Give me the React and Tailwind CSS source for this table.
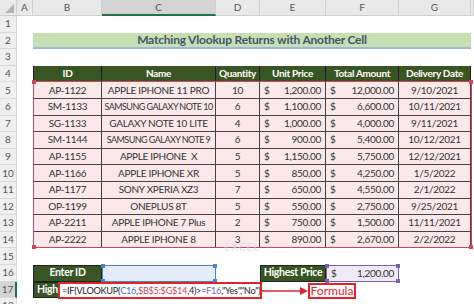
import React from 'react'

const rows = [
    ['AP-1122', 'APPLE IPHONE 11 PRO', '10', '1,200.00', '12,000.00', '9/10/2021'],
    ['SM-1133', 'SAMSUNG GALAXY NOTE 10', '6', '1,100.00', '6,600.00', '10/11/2021'],
    ['SG-1133', 'GALAXY NOTE 10 LITE', '4', '1,000.00', '4,000.00', '9/11/2021'],
    ['SM-1144', 'SAMSUNG GALAXY NOTE 9', '6', '900.00', '5,400.00', '10/12/2021'],
    ['AP-1155', 'APPLE IPHONE  X', '5', '1,150.00', '5,750.00', '12/12/2021'],
    ['AP-1166', 'APPLE IPHONE XR', '5', '850.00', '4,250.00', '1/5/2022'],
    ['AP-1177', 'SONY XPERIA XZ3', '7', '650.00', '4,550.00', '2/1/2022'],
    ['OP-1199', 'ONEPLUS 8T', '5', '550.00', '2,750.00', '9/25/2021'],
    ['AP-2211', 'APPLE IPHONE 7 Plus', '2', '750.00', '1,500.00', '11/11/2021'],
    ['AP-2222', 'APPLE IPHONE 8', '3', '890.00', '2,670.00', '2/2/2022'],
]

const RowLabel = ({ n, active }) => (
    <div
        className={
            'flex items-center justify-center text-[10px] tracking-normal text-[#555] border-r border-b border-[#dadada] ' +
            (active ? 'bg-[#d4d4d4] border-r-2 border-r-[#217346]' : 'bg-[#efefef]')
        }
    >
        {n}
    </div>
)

const Blank = ({ span }) => <div className={span || ''} />

const Money = ({ v }) => (
    <div className="flex items-center justify-between px-1 bg-[#fbe9ea] border-r border-b border-[#444]">
        <span>$</span>
        <span>{v}</span>
    </div>
)

const Cell = ({ children, first, tight }) => (
    <div
        className={
            'flex items-center justify-center bg-[#fbe9ea] border-r border-b border-[#444] whitespace-pre overflow-hidden ' +
            (first ? 'border-l ' : '') +
            (tight ? 'text-[9px] tracking-[-0.55px]' : '')
        }
    >
        {children}
    </div>
)

const Handle = ({ pos, color }) => (
    <span className={'absolute w-[4px] h-[4px] ' + pos + ' ' + color} />
)

export default function App() {
    const colHeads = ['A', 'B', 'C', 'D', 'E', 'F', 'G', '']
    return (
        <div
            className="relative w-[474px] h-[304px] overflow-hidden bg-white text-[10px] tracking-[-0.3px] text-[#333]"
            style={{ fontFamily: 'Lato, "Open Sans", sans-serif' }}
        >
            <div className="grid grid-cols-[17px_16px_69px_114px_44px_66px_73px_72px_1fr] grid-rows-[16px_repeat(18,16.6px)]">
                {/* column headers */}
                <div className="relative bg-[#e9e9e9] border-r border-b border-[#cfcfcf]">
                    <svg className="absolute right-[2px] bottom-[2px]" width="9" height="9" viewBox="0 0 9 9">
                        <polygon points="9,0 9,9 0,9" fill="#b5b5b5" />
                    </svg>
                </div>
                {colHeads.map((c, i) => (
                    <div
                        key={i}
                        className={
                            'flex items-center justify-center text-[10px] tracking-normal text-[#555] border-r border-b border-[#cfcfcf] ' +
                            (c === 'C' ? 'bg-[#d4d4d4] border-b-2 border-b-[#217346]' : 'bg-[#e9e9e9]')
                        }
                    >
                        {c}
                    </div>
                ))}

                {/* row 1 */}
                <RowLabel n={1} />
                <Blank span="col-span-8" />

                {/* row 2 title */}
                <RowLabel n={2} />
                <Blank />
                <div className="col-span-6 flex items-center justify-center bg-[#c6e0b4] border-b-2 border-[#9bb7de] text-[12px] tracking-[-0.2px] font-bold text-[#44546a]">
                    Matching Vlookup Returns with Another Cell
                </div>
                <Blank />

                {/* row 3 */}
                <RowLabel n={3} />
                <Blank span="col-span-8" />

                {/* row 4 header */}
                <RowLabel n={4} />
                <Blank />
                {['ID', 'Name', 'Quantity', 'Unit Price', 'Total Amount', 'Delivery Date'].map((h, i) => (
                    <div
                        key={h}
                        className={
                            'flex items-center justify-center bg-[#375623] text-white font-bold border-r border-b border-[#222] whitespace-nowrap overflow-hidden ' +
                            (i === 0 ? 'border-l' : '')
                        }
                    >
                        {h}
                    </div>
                ))}
                <Blank />

                {/* data rows */}
                {rows.map((r, i) => (
                    <React.Fragment key={r[0]}>
                        <RowLabel n={5 + i} />
                        <Blank />
                        <Cell first>{r[0]}</Cell>
                        <Cell tight={r[1].length > 20}>{r[1]}</Cell>
                        <Cell>{r[2]}</Cell>
                        <Money v={r[3]} />
                        <Money v={r[4]} />
                        <Cell>{r[5]}</Cell>
                        <Blank />
                    </React.Fragment>
                ))}

                {/* row 15 */}
                <RowLabel n={15} />
                <Blank span="col-span-8" />

                {/* row 16 */}
                <RowLabel n={16} />
                <Blank />
                <div className="flex items-center justify-center bg-[#375623] text-white font-bold text-[10.5px] border border-[#222]">
                    Enter ID
                </div>
                <div className="relative bg-[#e4ecf9] border border-[#4f7fd0]">
                    <Handle pos="-left-[2px] -top-[2px]" color="bg-[#4f7fd0]" />
                    <Handle pos="-right-[2px] -top-[2px]" color="bg-[#4f7fd0]" />
                    <Handle pos="-left-[2px] -bottom-[2px]" color="bg-[#4f7fd0]" />
                    <Handle pos="-right-[2px] -bottom-[2px]" color="bg-[#4f7fd0]" />
                </div>
                <Blank />
                <div className="flex items-center justify-center bg-[#375623] text-white font-bold text-[10.5px] border border-[#222] whitespace-nowrap">
                    Highest Price
                </div>
                <div className="relative flex items-center justify-between px-1 bg-[#efeaf7] border border-[#7b5fb0]">
                    <span>$</span>
                    <span>1,200.00</span>
                    <Handle pos="-left-[2px] -top-[2px]" color="bg-[#7b5fb0]" />
                    <Handle pos="-right-[2px] -top-[2px]" color="bg-[#7b5fb0]" />
                    <Handle pos="-left-[2px] -bottom-[2px]" color="bg-[#7b5fb0]" />
                    <Handle pos="-right-[2px] -bottom-[2px]" color="bg-[#7b5fb0]" />
                </div>
                <Blank span="col-span-2" />

                {/* row 17 */}
                <RowLabel n={17} active />
                <Blank />
                <div className="flex items-center pl-[3px] bg-[#375623] text-white font-bold text-[10.5px] border border-[#222] overflow-hidden whitespace-nowrap">
                    Highest Price
                </div>
                <Blank span="col-span-6" />

                {/* row 18 */}
                <RowLabel n={18} />
                <Blank span="col-span-8" />
            </div>

            {/* range highlight for $B$5:$G$14 */}
            <div className="absolute left-[33px] top-[81px] w-[439px] h-[167px] border border-[#d0435a] pointer-events-none">
                <Handle pos="-left-[2px] -top-[2px]" color="bg-[#d0435a]" />
                <Handle pos="-right-[2px] -top-[2px]" color="bg-[#d0435a]" />
                <Handle pos="-left-[2px] -bottom-[2px]" color="bg-[#d0435a]" />
                <Handle pos="-right-[2px] -bottom-[2px]" color="bg-[#d0435a]" />
            </div>

            {/* watermark */}
            <div className="absolute left-[224px] top-[239px] text-[11px] font-bold tracking-wider text-[#d3deef] opacity-60">
                EXCEL
            </div>

            {/* formula being edited */}
            <div className="absolute left-[58px] top-[282px] w-[204px] h-[17px] flex items-center pl-[2px] bg-white border-2 border-[#e2232c] text-[9.2px] tracking-[-0.3px] text-[#222] whitespace-nowrap overflow-hidden">
                =IF(VLOOKUP(<span className="text-[#3f6fce]">C16</span>,
                <span className="text-[#d0435a]">$B$5:$G$14</span>,4)&gt;=
                <span className="text-[#7b5fb0]">F16</span>,"Yes","No")
            </div>

            <svg className="absolute left-[262px] top-[286px]" width="46" height="10" viewBox="0 0 46 10">
                <line x1="0" y1="5" x2="39" y2="5" stroke="#e2232c" strokeWidth="1.5" />
                <polygon points="38,1 46,5 38,9" fill="#e2232c" />
            </svg>

            <div className="absolute left-[308px] top-[283px] w-[48px] h-[16px] flex items-center justify-center border-2 border-[#e2232c] bg-white text-[12px] tracking-normal text-[#e2232c]">
                Formula
            </div>
        </div>
    )
}
